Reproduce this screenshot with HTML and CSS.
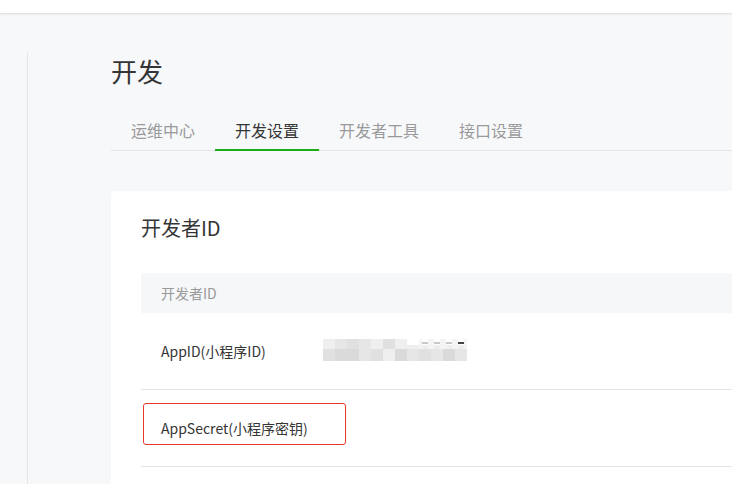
FILE: index.html
```html
<!DOCTYPE html>
<html lang="zh-CN">
<head>
<meta charset="utf-8">
<title>开发</title>
<link rel="stylesheet" href="styles.css">
</head>
<body>
<div class="topbar"></div>
<div class="layout">
  <aside class="sidebar"></aside>
  <main class="main">
    <h1 class="page-title">开发</h1>
    <nav class="tabs">
      <a class="tab">运维中心</a>
      <a class="tab active">开发设置</a>
      <a class="tab">开发者工具</a>
      <a class="tab">接口设置</a>
    </nav>
    <section class="card">
      <h2 class="card-title">开发者ID</h2>
      <div class="table">
        <div class="thead">开发者ID</div>
        <div class="row">
          <div class="label">AppID(小程序ID)</div>
          <div class="value">
            <div class="mosaic">
              <span class="m1"></span><span class="m2"></span><span class="m3"></span><span class="m2"></span><span class="m1"></span><span class="m3"></span><span class="m1"></span><span class="w"></span><span class="w d"></span><span class="w d"></span><span class="w d"></span><span class="w dk"></span>
              <span class="m3"></span><span class="m4"></span><span class="m4"></span><span class="m2"></span><span class="m3"></span><span class="m1"></span><span class="m4"></span><span class="m2"></span><span class="m3"></span><span class="m2"></span><span class="m4"></span><span class="m2"></span>
            </div>
          </div>
        </div>
        <div class="row">
          <div class="label">AppSecret(小程序密钥)</div>
          <div class="value"></div>
          <div class="highlight"></div>
        </div>
      </div>
    </section>
  </main>
</div>
</body>
</html>
```
FILE: styles.css
```css
html, body {
  margin: 0;
  padding: 0;
}
body {
  width: 732px;
  height: 484px;
  overflow: hidden;
  background: #f7f8fa;
  font-family: "Noto Sans CJK SC", "Noto Sans", sans-serif;
  color: #353535;
}
.topbar {
  height: 13px;
  background: #fff;
  box-shadow: 0 1px 2px rgba(0, 0, 0, 0.12);
  position: relative;
  z-index: 1;
}
.layout {
  display: flex;
  margin-top: 40px;
}
.sidebar {
  width: 27px;
  flex: none;
  border-right: 1px solid #e3e4e6;
  min-height: 431px;
}
.main {
  flex: 1;
  min-width: 0;
  margin-left: 83px;
}
.page-title {
  margin: 0 0 29px;
  font-size: 26px;
  line-height: 36px;
  font-weight: 400;
  color: #353535;
}
.tabs {
  display: flex;
  border-bottom: 1px solid #e4e5e7;
}
.tab {
  position: relative;
  padding: 0 20px 8px;
  font-size: 16px;
  line-height: 24px;
  color: #9a9a9a;
}
.tab.active {
  color: #353535;
}
.tab.active::after {
  content: "";
  position: absolute;
  left: 0;
  right: 0;
  bottom: -1px;
  height: 2px;
  background: #1aad19;
}
.card {
  margin-top: 40px;
  background: #fff;
  border-radius: 4px 0 0 4px;
  padding: 23px 0 30px 30px;
}
.card-title {
  margin: 0 0 31px;
  font-size: 20px;
  line-height: 28px;
  font-weight: 400;
  color: #353535;
}
.thead {
  height: 40px;
  line-height: 40px;
  background: #f6f7f9;
  padding-left: 20px;
  font-size: 14px;
  color: #9a9a9a;
}
.row {
  position: relative;
  display: grid;
  grid-template-columns: 182px 1fr;
  align-items: center;
  height: 76px;
  border-bottom: 1px solid #e4e5e7;
}
.label {
  padding-left: 20px;
  font-size: 14px;
  color: #353535;
}
.value {
  font-size: 14px;
}
.mosaic {
  display: grid;
  grid-template-columns: repeat(12, 12px);
  grid-template-rows: 10px 12px;
  width: 144px;
  margin-top: -2px;
}
.mosaic span { display: block; }
.mosaic .m1 { background: #efefef; }
.mosaic .m2 { background: #e6e6e6; }
.mosaic .m3 { background: #e0e0e0; }
.mosaic .m4 { background: #dadada; }
.mosaic .w { background: linear-gradient(#fff 0 6px, #eeeeee 6px); }
.mosaic .w.d { background: linear-gradient(#fff 0 3px, #c8c8c8 3px 5px, #fff 5px 6px, #eeeeee 6px); background-size: 6px 100%; background-repeat: no-repeat; background-position: 3px 0; background-color: #f4f4f4; }
.mosaic .w.dk { background: linear-gradient(#fff 0 3px, #444 3px 5px, #fff 5px 6px, #eeeeee 6px); background-size: 6px 100%; background-repeat: no-repeat; background-position: 3px 0; background-color: #f4f4f4; }
.highlight {
  position: absolute;
  left: 2px;
  top: 13px;
  width: 201px;
  height: 40px;
  border: 1px solid #e8382c;
  border-radius: 3px;
  pointer-events: none;
}
```
